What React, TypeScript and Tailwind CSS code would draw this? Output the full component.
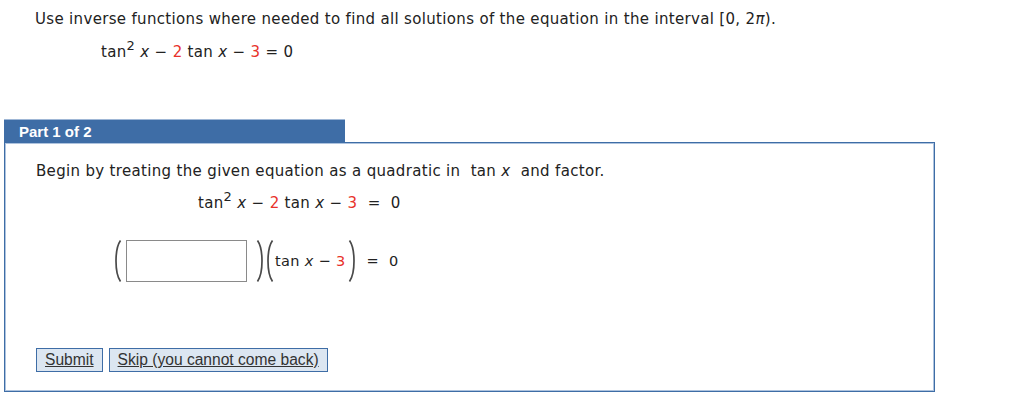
import React from "react";

const Red = ({ children }: { children: React.ReactNode }) => (
  <span className="text-[#e8322b]">{children}</span>
);

const Paren = ({ side }: { side: "l" | "r" }) => (
  <svg width="9" height="44" viewBox="0 0 9 44" className="shrink-0">
    {side === "l" ? (
      <path d="M7.5 1.5 C1.5 10, 1.5 34, 7.5 42.5" fill="none" stroke="#4a4a4a" strokeWidth="1.7" />
    ) : (
      <path d="M1.5 1.5 C7.5 10, 7.5 34, 1.5 42.5" fill="none" stroke="#4a4a4a" strokeWidth="1.7" />
    )}
  </svg>
);

const Sq = () => <sup className="text-[13px] top-[-7px]">2</sup>;

export default function App() {
  return (
    <div className="w-[1024px] h-[417px] bg-white text-[#222] font-['DejaVu_Sans',_Verdana,_sans-serif] text-[15px] tracking-[0.33px] leading-none overflow-hidden">
      <div className="pt-[12px] pl-[35px] h-[26px]">
        Use inverse functions where needed to find all solutions of the equation in the interval [0, 2<i>π</i>).
      </div>
      <div className="pt-[19px] pl-[101px] h-[28px]">
        tan<Sq /> <i>x</i> − <Red>2</Red> tan <i>x</i> − <Red>3</Red> = 0
      </div>
      <div className="mt-[65px] ml-[4px] w-[931px]">
        <div className="w-[341px] h-[23px] bg-[#3e6da6] border-t border-[#9fb7d6] text-white font-bold font-['Liberation_Sans',_Arial,_sans-serif] tracking-normal text-[15px] pl-[15px] flex items-center">
          Part 1 of 2
        </div>
        <div className="border border-[#3e6da6] h-[250px]">
          <div className="border border-[#aec3de] h-full pl-[30px] pt-[20px]">
            <div className="h-[17px]">
              Begin by treating the given equation as a quadratic in&nbsp; tan <i>x</i>&nbsp; and factor.
            </div>
            <div className="pl-[162px] pt-[15px] h-[30px]">
              tan<Sq /> <i>x</i> − <Red>2</Red> tan <i>x</i> − <Red>3</Red>&nbsp; = &nbsp;0
            </div>
            <div className="pl-[77px] mt-[28px] flex items-center h-[44px]">
              <Paren side="l" />
              <div className="ml-[4px] w-[121px] h-[42px] border border-[#8a8a8a] bg-white" />
              <div className="ml-[9px] flex items-center">
                <Paren side="r" />
                <Paren side="l" />
              </div>
              <span className="ml-[1px] text-[14.5px]">
                tan <i>x</i> − <Red>3</Red>
              </span>
              <div className="ml-[2px]"><Paren side="r" /></div>
              <span className="ml-[10px] text-[14.5px]">=&nbsp; 0</span>
            </div>
            <div className="mt-[65px] flex gap-[6px] font-['Liberation_Sans',_Arial,_sans-serif] tracking-normal text-[15.6px] text-[#333]">
              <button className="h-[24px] px-[8px] bg-[#dce6f1] border border-[#3e6da6] underline">Submit</button>
              <button className="h-[24px] px-[8px] bg-[#dce6f1] border border-[#3e6da6] underline">Skip (you cannot come back)</button>
            </div>
          </div>
        </div>
      </div>
    </div>
  );
}
